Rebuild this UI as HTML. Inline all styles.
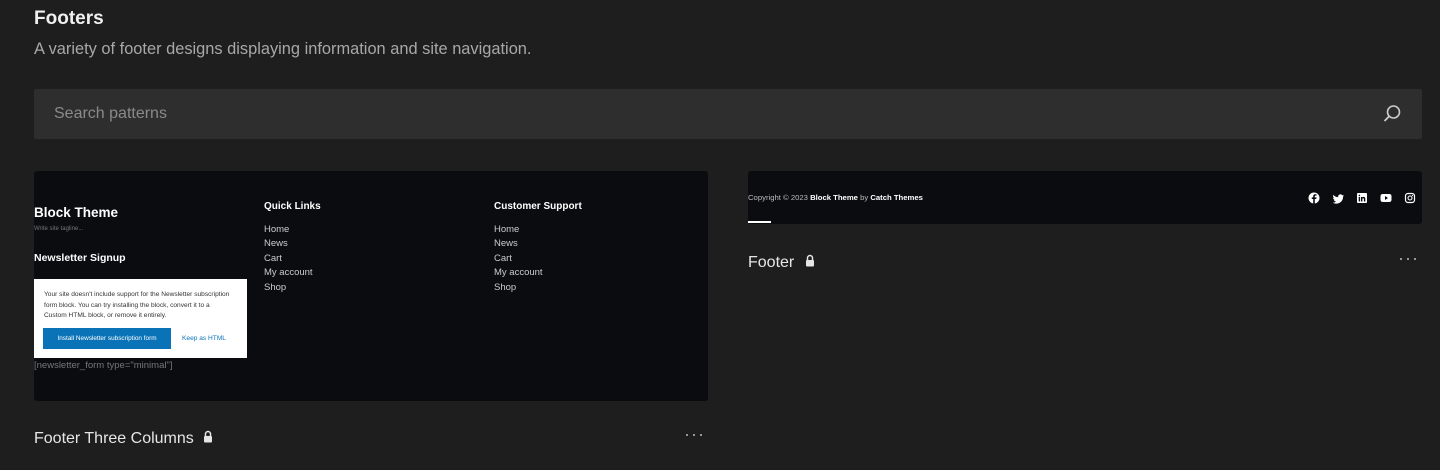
<!DOCTYPE html>
<html><head><style>
*{margin:0;padding:0;box-sizing:border-box}
body{width:1440px;height:470px;background:#1e1e1e;font-family:"Liberation Sans",sans-serif;color:#fff;position:relative;overflow:hidden}
.a{position:absolute;white-space:nowrap}
h1{position:absolute;left:34px;top:8px;font-size:19px;font-weight:bold;color:#f0f0f0}
.sub{left:34px;top:40px;font-size:16.4px;color:#a8a8a8}
.search{position:absolute;left:34px;top:89px;width:1388px;height:50px;background:#2e2e2e;border-radius:2px}
.search span{position:absolute;left:20px;top:16px;font-size:16px;color:#8a8a8a}
.prev{position:absolute;background:#0b0c10;border-radius:3px}
.w{color:#fff;font-weight:bold}
.l{color:#ccc;font-size:9.5px;line-height:14.4px}
.lbl{font-size:16px;color:#e6e6e6}
.dots{color:#aaa;font-size:18px;letter-spacing:1px}
</style></head><body>
<h1>Footers</h1>
<div class="a sub">A variety of footer designs displaying information and site navigation.</div>
<div class="search"><span>Search patterns</span>
<svg style="position:absolute;right:20px;top:15px" width="20" height="20" viewBox="0 0 20 20"><circle cx="11.5" cy="8" r="6" fill="none" stroke="#ccc" stroke-width="1.6"/><path d="M7.2 12.3 2.5 17" stroke="#ccc" stroke-width="1.8"/></svg></div>

<div class="prev" style="left:34px;top:171px;width:674px;height:230px"></div>
<div class="a w" style="left:34px;top:205px;font-size:13.5px">Block Theme</div>
<div class="a" style="left:34px;top:226px;font-size:6px;color:#777">Write site tagline...</div>
<div class="a w" style="left:34px;top:252px;font-size:10.5px">Newsletter Signup</div>
<div style="position:absolute;left:34px;top:279px;width:213px;height:79px;background:#fff"></div>
<div class="a" style="left:44px;top:290px;font-size:6.6px;line-height:10.5px;color:#333;white-space:normal;width:190px">Your site doesn't include support for the Newsletter subscription form block. You can try installing the block, convert it to a Custom HTML block, or remove it entirely.</div>
<div class="a" style="left:43px;top:328px;width:128px;height:21px;background:#0a73b8;color:#fff;font-size:6.4px;line-height:21px;text-align:center">Install Newsletter subscription form</div>
<div class="a" style="left:182px;top:335px;font-size:6.6px;color:#0a73b8">Keep as HTML</div>
<div class="a" style="left:34px;top:360px;font-size:9.5px;color:#777">[newsletter_form type="minimal"]</div>
<div class="a w" style="left:264px;top:201px;font-size:10px">Quick Links</div>
<div class="a l" style="left:264px;top:223px">Home<br>News<br>Cart<br>My account<br>Shop</div>
<div class="a w" style="left:494px;top:201px;font-size:10px">Customer Support</div>
<div class="a l" style="left:494px;top:223px">Home<br>News<br>Cart<br>My account<br>Shop</div>
<div class="a lbl" style="left:34px;top:430px">Footer Three Columns</div>
<svg class="a" style="left:203px;top:430px" width="10" height="13" viewBox="0 0 10 13"><path d="M2.5 6V4a2.5 2.5 0 0 1 5 0v2" fill="none" stroke="#e6e6e6" stroke-width="1.5"/><rect x="1" y="6" width="8" height="6.5" rx="1" fill="#e6e6e6"/></svg>
<div class="a dots" style="left:684px;top:424px">···</div>

<div class="prev" style="left:748px;top:171px;width:674px;height:53px"></div>
<div class="a" style="left:748px;top:193px;font-size:7.7px;color:#bbb">Copyright © 2023 <b style="color:#fff">Block Theme</b> by <b style="color:#fff">Catch Themes</b></div>
<div class="a" style="left:748px;top:221px;width:23px;height:2px;background:#fff"></div>
<svg class="a" style="left:1308px;top:192px" width="110" height="12" viewBox="0 0 110 12"><circle cx="6" cy="6" r="5.5" fill="#fff"/><path d="M6.8 11.5V7h1.5l.2-1.6H6.8v-1c0-.5.2-.8.8-.8h.9V2.2H7.2c-1.3 0-2 .8-2 2v1.2H3.8V7h1.4v4.5z" fill="#0b0c10"/><path transform="translate(25 0)" d="M11 3.5c-.4.2-.9.3-1.3.4.5-.3.8-.7 1-1.2-.5.3-1 .4-1.5.5a2.3 2.3 0 0 0-4 2.1C3.3 5.2 1.6 4.3.4 2.9c-.6 1.1-.3 2.4.7 3.1-.4 0-.7-.1-1-.3 0 1.100.8 2.1 1.8 2.3-.3.1-.7.1-1 0 .3.9 1.2 1.6 2.2 1.6-.9.8-2.2 1.1-3.4 1 4.7 2.8 10.6-.4 10.4-6.1.4-.3.7-.6.9-1z" fill="#fff"/><rect x="49" y="1" width="10" height="10" rx="1" fill="#fff"/><path d="M50.7 5h1.4v4.5h-1.4zM51.4 2.6a.8.8 0 1 1 0 1.6.8.8 0 0 1 0-1.6zM53 5h1.3v.6c.3-.5.8-.7 1.4-.7 1.3 0 1.6.9 1.6 2v2.6h-1.4V7.3c0-.5 0-1.1-.7-1.1s-.8.5-.8 1.1v2.2H53z" fill="#0b0c10"/><rect x="72.5" y="2" width="11" height="8" rx="2.2" fill="#fff"/><path d="M77 4v4l3-2z" fill="#0b0c10"/><rect x="97.5" y="1.5" width="9" height="9" rx="2.5" fill="none" stroke="#fff" stroke-width="1.2"/><circle cx="102" cy="6" r="2" fill="none" stroke="#fff" stroke-width="1.1"/><circle cx="104.5" cy="3.5" r=".6" fill="#fff"/></svg>
<div class="a lbl" style="left:748px;top:254px">Footer</div>
<svg class="a" style="left:805px;top:254px" width="10" height="13" viewBox="0 0 10 13"><path d="M2.5 6V4a2.5 2.5 0 0 1 5 0v2" fill="none" stroke="#e6e6e6" stroke-width="1.5"/><rect x="1" y="6" width="8" height="6.5" rx="1" fill="#e6e6e6"/></svg>
<div class="a dots" style="left:1398px;top:248px">···</div>
</body></html>
